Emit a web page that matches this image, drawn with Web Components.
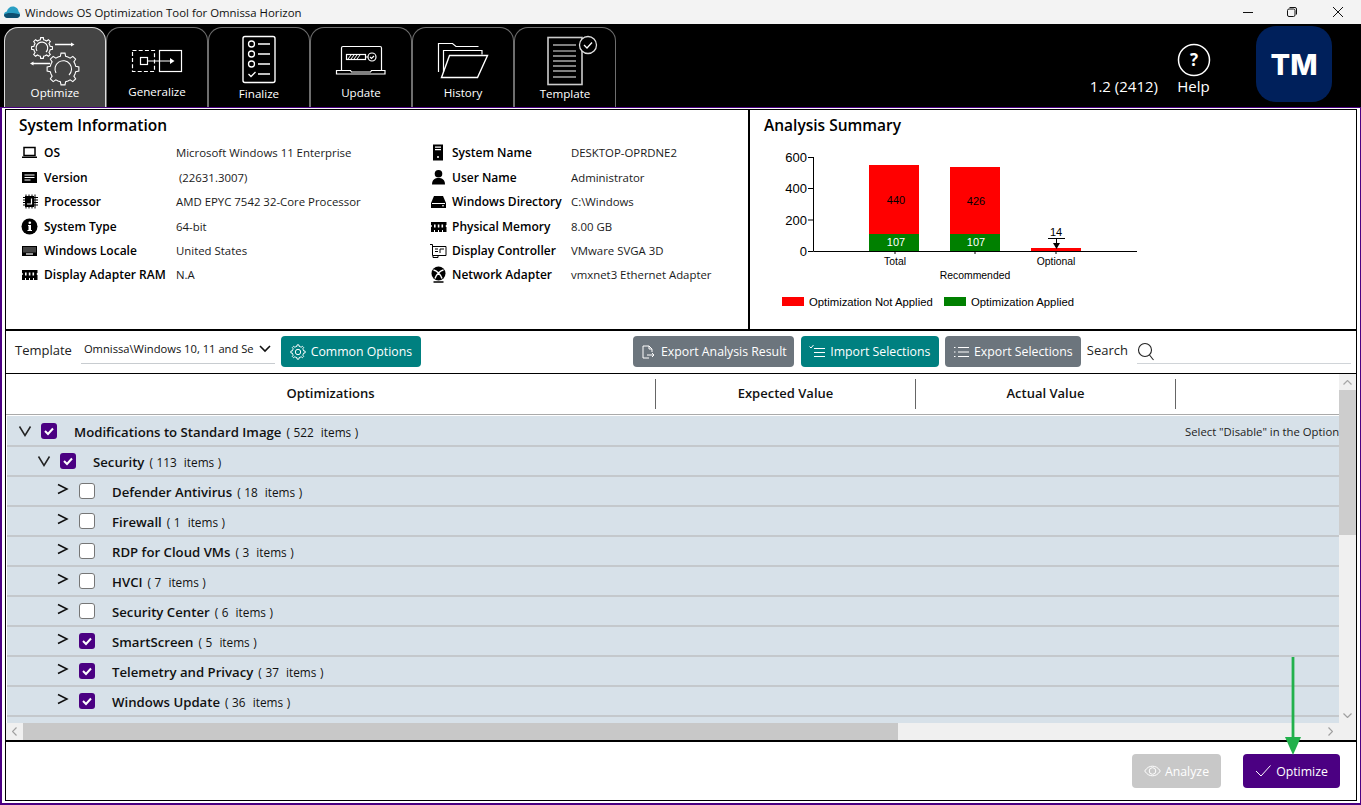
<!DOCTYPE html>
<html lang="en"><head><meta charset="utf-8"><title>Windows OS Optimization Tool</title>
<style>
html,body{margin:0;padding:0;width:1361px;height:805px;overflow:hidden;background:#fff;font-family:"Open Sans","Noto Sans",sans-serif;}
</style></head><body>
<os-app></os-app>
<script>
const UI='"Open Sans","Noto Sans",sans-serif';
function gear(cx,cy,ro,ri,n){let d='';const st=Math.PI*2/n;for(let i=0;i<n;i++){const a=i*st-Math.PI/2;const p=[[a-st*.5,ri],[a-st*.26,ri],[a-st*.16,ro],[a+st*.16,ro],[a+st*.26,ri]];p.forEach((q,j)=>{const x=(cx+q[1]*Math.cos(q[0])).toFixed(2),y=(cy+q[1]*Math.sin(q[0])).toFixed(2);d+=(i===0&&j===0?'M':'L')+x+' '+y;});}return d+'Z';}
const S='fill="none" stroke="#fff"';
const TAB_ICONS={
optimize:`<g ${S} stroke-width="1.1"><path d="${gear(42,48,10.500,8.300,8)}"/><path d="M37 51a5.800 5.800 0 1 1 9 1"/><path d="${gear(63,69,16,13,8)}"/><path d="M56 73a8.300 8.300 0 1 1 13 2"/></g><path d="M55 44.500h17" stroke="#fff" stroke-width="1.300"/><path d="M71 42.500l3.500 2-3.500 2z" fill="#fff"/><path d="M33 63.500h17" stroke="#fff" stroke-width="1.300"/><path d="M33.500 61.500l-3.500 2 3.500 2z" fill="#fff"/>`,
generalize:`<rect x="132.5" y="50.5" width="22" height="21" fill="none" stroke="#fff" stroke-width="1.2" stroke-dasharray="4 2.2"/><rect x="159.5" y="50.5" width="22" height="21" fill="none" stroke="#fff" stroke-width="1.2"/><rect x="140.5" y="57.5" width="7" height="7" fill="none" stroke="#fff" stroke-width="1.2"/><path d="M147 61h24" stroke="#fff" stroke-width="1.2"/><path d="M170 58l4.5 3-4.5 3z" fill="#fff"/>`,
finalize:`<rect x="243" y="36.5" width="32" height="46" rx="2" fill="none" stroke="#fff" stroke-width="1.4"/><g fill="none" stroke="#fff" stroke-width="1.3"><circle cx="251.5" cy="44" r="3"/><circle cx="251.5" cy="54" r="3"/><circle cx="251.5" cy="64" r="3"/><path d="M258 44h12M258 54h12M258 64h12M258 74h12"/><path d="M248.5 74l2.5 2.5 4.5-4.5"/></g>`,
update:`<g fill="none" stroke="#fff" stroke-width="1.2"><path d="M341.5 70V48a1.500 1.500 0 0 1 1.500-1.500h37a1.500 1.500 0 0 1 1.500 1.500v22"/><path d="M336.500 70.500h14l1 1.500h19l1-1.500h13.500v3.500h-48.500z"/><rect x="346.500" y="54.500" width="19" height="5"/><path d="M365 57h3"/><circle cx="372" cy="57" r="4"/><path d="M370 57l1.500 1.500 2.500-2.500"/><path d="M348 59l3-4M351 59l3-4M354 59l3-4M357 59l3-4" stroke-width="1"/></g>`,
history:`<g fill="none" stroke="#fff" stroke-width="1.2"><path d="M438.500 72V43.500h14l3.500 3h22.500"/><path d="M443.500 72V50.500h38.500v4"/><path d="M449.500 55.500h38l-10 22h-36z" stroke-width="1.400"/></g>`,
template:`<rect x="548" y="37.500" width="34" height="47" fill="none" stroke="#ccc" stroke-width="1.600"/><path d="M553 45h23M553 56h23M553 61h23M553 66h23M553 71h23M553 77h23" stroke="#fff" stroke-width="1.200"/><path d="M553 51h23" stroke="#999" stroke-width="1.500"/><circle cx="588" cy="45" r="8.500" fill="#000" stroke="#ddd" stroke-width="1.300"/><path d="M584 45l3 3 5-5.500" fill="none" stroke="#fff" stroke-width="1.300"/>`
};
const TABS=[['optimize','Optimize',5,93,true],['generalize','Generalize',107,92],['finalize','Finalize',209,94],['update','Update',311,93],['history','History',413,93],['template','Template',515,94]];
const SYS={
laptop:`<path d="M3 3.500h11v8H3z" fill="none" stroke="#000" stroke-width="1.500"/><path d="M1 12.500h15v1.500H1z"/>`,
note:`<path d="M1 3h15v11H1z"/><path d="M3.500 6h10M3.500 8.500h10M3.500 11h6" stroke="#fff"/>`,
chip:`<path d="M4 3h9v11H4z" fill="#000"/><path d="M2 4.500h15M2 7h15M2 9.500h15M2 12h15M5 1.500v14M8 1.500v14M11 1.500v14M14 1.500v14" stroke="#000"/><path d="M10.500 5.500v5.500H6" stroke="#fff" fill="none" stroke-width="1.200"/>`,
info:`<circle cx="8.500" cy="8.500" r="8"/><path d="M7 7h3v5h1v1H6.500v-1H7.500V8H7z" fill="#fff"/><circle cx="8.800" cy="4.800" r="1.300" fill="#fff"/>`,
keyboard:`<path d="M1 4h15v10H1z"/><path d="M2 5h13v5.500H2z" fill="#444"/><path d="M5 12h7" stroke="#fff" stroke-width="1.200"/>`,
ram:`<path d="M1 4h15.500v3h-.700v2h.700v5H13v-2h-1v2H9v-2H8v2H5v-2H4v2H1V9h.700V7H1z"/><path d="M4 6.500h1.600v3H4zM7.800 6.500h1.600v3H7.800zM11.500 6.500h1.600v3h-1.600z" fill="#fff"/>`,
tower:`<path d="M3 .500h10v16H3z"/><path d="M5 2.500h6v1.200H5zM5 5h6v1.200H5z" fill="#fff"/><circle cx="8" cy="13" r="1" fill="#fff"/>`,
user:`<circle cx="8.500" cy="4.700" r="3.800"/><path d="M2 15.500c0-5 3-6.500 6.500-6.500s6.500 1.500 6.500 6.500z"/>`,
disk:`<path d="M4 3h9l3 7v5H1v-5z"/><path d="M2 10.500h13" stroke="#fff"/><path d="M12 12.800h2" stroke="#fff"/>`,
card:`<path d="M0 2.500h2.500v11H16V4.500H3" fill="none" stroke="#000" stroke-width="1"/><path d="M5 7h3M5 9.500h3M10 7h4M10 7v4" fill="none" stroke="#000"/><path d="M3 13.500v2h5v-2" fill="none" stroke="#000"/>`,
globe:`<circle cx="8.500" cy="7.500" r="7"/><path d="M3.500 4c3 .5 7 4 8.500 8.500M13.500 4c-3 .5-7 4-8.500 8.500" fill="none" stroke="#fff" stroke-width="1.400"/><path d="M3.500 16h10" stroke="#000" stroke-width="1.500"/>`
};
const BTN={
gear:`<path d="${gear(8,8,7.200,5.700,8)}" fill="none" stroke="#fff" stroke-width="1"/><circle cx="8" cy="8" r="2.700" fill="none" stroke="#fff"/>`,
doc:`<path d="M9 14H3V2h6l3 3v3M9 2v3h3" fill="none" stroke="#fff"/><path d="M7 11h7M12 9l2 2-2 2" fill="none" stroke="#fff"/>`,
listcheck:`<path d="M5 4.500h11M5 8.500h11M5 12.500h11" stroke="#fff"/><path d="M.500 2.500l1.500 1.500 2.500-3" fill="none" stroke="#fff"/>`,
list:`<path d="M5 3.500h11M5 8h11M5 12.500h11" stroke="#fff"/><path d="M1 3.500h2M1 8h2M1 12.500h2" stroke="#fff" stroke-dasharray="1 .500"/>`,
eye:`<path d="M.700 8C3 4.500 5.500 3.200 8.500 3.200S14 4.500 16.300 8C14 11.500 11.500 12.800 8.500 12.800S3 11.500 .700 8z" fill="none" stroke="#fff"/><circle cx="8.500" cy="8" r="3.300" fill="none" stroke="#fff"/>`,
check:`<path d="M1 8l5 5L15.500 2.500" fill="none" stroke="#fff" stroke-width="1"/>`
};
function el(name,html){customElements.define(name,class extends HTMLElement{constructor(){super();this.attachShadow({mode:'open'}).innerHTML=typeof html==='function'?html(this):html;}});}

el('title-bar',`<style>
:host{display:flex;align-items:center;height:24px;background:#f3f3f3;color:#111;font:11.400px ${UI};box-sizing:border-box;padding-left:4px}
svg{display:block}
.t{margin-left:5px;flex:1;white-space:nowrap}
.c{width:46px;height:24px;display:flex;align-items:center;justify-content:center}
</style>
<svg width="16" height="14" viewBox="0 0 16 14"><path d="M3.500 13C1.500 13 0 11.500 0 9.700 0 8 1.200 6.800 2.800 6.500 3.500 3.500 5.800 1.500 8.800 1.500c3.200 0 5.600 2.400 5.900 5.200C15.500 7.200 16 8.300 16 9.500 16 11.500 14.500 13 12.500 13z" fill="#2a9fc4"/><path d="M0 9.700C3 7.500 8 7.500 16 9.500 16 11.500 14.500 13 12.500 13h-9C1.500 13 0 11.500 0 9.700z" fill="#0f4f70"/></svg>
<span class="t">Windows OS Optimization Tool for Omnissa Horizon</span>
<span class="c"><svg width="12" height="12"><path d="M1 6.500h10" stroke="#111" stroke-width="1"/></svg></span>
<span class="c" style="margin-left:-2px"><svg width="12" height="12"><rect x="1.500" y="3" width="7.500" height="7.500" rx="1.500" fill="none" stroke="#111"/><path d="M3.500 1.500h5.500a1.500 1.500 0 0 1 1.500 1.500v5.500" fill="none" stroke="#111"/></svg></span>
<span class="c"><svg width="12" height="12"><path d="M1 1l10 10M11 1L1 11" stroke="#111" stroke-width="1"/></svg></span>`);

el('nav-tab',t=>{const k=t.getAttribute('k'),a=t.hasAttribute('active'),x=+t.getAttribute('x'),ly=+t.getAttribute('ly');
return `<style>
:host{display:flex;flex-direction:column;align-items:center;width:102px;height:80px;box-sizing:border-box;border:1px solid ${a?'#ddd':'#6e6e6e'};border-bottom:0;border-radius:14px 14px 0 0;background:${a?'#444':'#000'};color:#fff;font:11.600px/16px ${UI};overflow:hidden}
svg{display:block;flex:none}
.l{margin-top:${ly-8-87}px}
</style><svg width="100" height="59" viewBox="${x} 28 100 59">${TAB_ICONS[k]}</svg><span class="l"><slot></slot></span>`;});

el('app-header',`<style>
:host{display:flex;height:83px;background:#000;color:#fff;box-sizing:border-box;padding:3px 0 0 4px;font:15px ${UI}}
.tabs{display:flex;align-items:flex-end;height:80px}
.sp{flex:1}
.ver{align-self:flex-start;margin:49px 18px 0 0;line-height:20px;font-size:15px}
.help{display:flex;flex-direction:column;align-items:center;width:35px;margin:16px 45px 0 0;font-size:15px;line-height:20px;flex:none}
.help svg{display:block;margin-bottom:-1px}
.logo{width:76px;height:76px;border-radius:20px;background:#00205b;color:#fff;font:800 29px/78px Inter,sans-serif;text-align:center;margin:-1px 29px 0 0;flex:none}
</style><div class="tabs">${TABS.map(t=>`<nav-tab k="${t[0]}" x="${t[2]}" ly="${t[3]}" ${t[4]?'active':''}>${t[1]}</nav-tab>`).join('')}</div>
<div class="sp"></div><div class="ver">1.2 (2412)</div>
<div class="help"><svg width="34" height="34" viewBox="0 0 34 34"><circle cx="17" cy="17" r="15.500" fill="none" stroke="#fff" stroke-width="1.500"/><text x="17" y="23" text-anchor="middle" font-family="Open Sans" font-weight="700" font-size="17" fill="#fff">?</text></svg><span>Help</span></div>
<div class="logo">TM</div>`);

el('info-item',t=>`<style>
:host{display:grid;grid-template-columns:var(--ic) var(--lb) 1fr;align-items:center;height:24.400px;font:11.400px ${UI};color:#1a1a1a;white-space:nowrap}
svg{display:block;margin-left:var(--ix)}
b{font:600 12px ${UI};color:#000}
</style><svg width="17" height="17" viewBox="0 0 17 17">${SYS[t.getAttribute('i')]}</svg><b>${t.getAttribute('l')}</b><span>${t.getAttribute('v')}</span>`);

el('system-info',`<style>
:host{display:block;width:744px;box-sizing:border-box;border-right:2px solid #000;padding:5px 0 0 13px;color:#000;}
h2{margin:0 0 5.800px;font:600 15.500px/20px ${UI}}
.g{display:grid;grid-template-columns:412px 1fr}
.a{--ic:25px;--lb:132px;--ix:2px}
.b{--ic:21px;--lb:119px;--ix:-1px}
</style><h2>System Information</h2><div class="g"><div class="a">
<info-item i="laptop" l="OS" v="Microsoft Windows 11 Enterprise"></info-item>
<info-item i="note" l="Version" v="&nbsp;(22631.3007)"></info-item>
<info-item i="chip" l="Processor" v="AMD EPYC 7542 32-Core Processor"></info-item>
<info-item i="info" l="System Type" v="64-bit"></info-item>
<info-item i="keyboard" l="Windows Locale" v="United States"></info-item>
<info-item i="ram" l="Display Adapter RAM" v="N.A"></info-item>
</div><div class="b">
<info-item i="tower" l="System Name" v="DESKTOP-OPRDNE2"></info-item>
<info-item i="user" l="User Name" v="Administrator"></info-item>
<info-item i="disk" l="Windows Directory" v="C:\\Windows"></info-item>
<info-item i="ram" l="Physical Memory" v="8.00 GB"></info-item>
<info-item i="card" l="Display Controller" v="VMware SVGA 3D"></info-item>
<info-item i="globe" l="Network Adapter" v="vmxnet3 Ethernet Adapter"></info-item>
</div></div>`);

el('analysis-summary',`<style>
:host{display:block;flex:1;position:relative;box-sizing:border-box;padding:5px 0 0 14px;color:#000}
h2{margin:0;font:600 15.500px/20px ${UI}}
svg{display:block;margin:1px 0 0 -14px}
text{font-family:"Liberation Sans",sans-serif;fill:#000}
.ax{font-size:13px}.s{font-size:10.400px}.lg{font-size:11.300px}.v{font-size:11px}
</style><h2>Analysis Summary</h2>
<svg width="600" height="193" viewBox="750 136 600 193">
<path d="M813.500 157v94.500H1137M808 157.500h5M808 188.500h5M808 220h5M808 251.500h5M895 251v3M975 251v3M1056 251v3" fill="none" stroke="#000"/>
<text class="ax" x="807" y="161.500" text-anchor="end">600</text><text class="ax" x="807" y="192.500" text-anchor="end">400</text><text class="ax" x="807" y="224.500" text-anchor="end">200</text><text class="ax" x="807" y="255.500" text-anchor="end">0</text>
<rect x="869" y="165" width="50" height="69" fill="#f00"/><rect x="869" y="234" width="50" height="17" fill="#008000"/>
<rect x="950" y="167" width="50" height="67" fill="#f00"/><rect x="950" y="234" width="50" height="17" fill="#008000"/>
<rect x="1031" y="248" width="50" height="3" fill="#f00"/>
<text class="v" x="896" y="203.500" text-anchor="middle">440</text><text class="v" x="976" y="204.500" text-anchor="middle">426</text>
<text class="v" x="896" y="246" text-anchor="middle" style="fill:#fff">107</text><text class="v" x="976" y="246" text-anchor="middle" style="fill:#fff">107</text>
<text class="v" x="1056" y="236" text-anchor="middle">14</text>
<path d="M1048 238.500h17M1056.500 239v5" stroke="#000"/><path d="M1053 243h7l-3.500 6z" fill="#000"/>
<text class="s" x="895" y="264.500" text-anchor="middle">Total</text><text class="s" x="1056" y="264.500" text-anchor="middle">Optional</text><text class="s" x="975" y="279" text-anchor="middle">Recommended</text>
<rect x="782" y="297" width="22" height="9" fill="#f00"/><text class="lg" x="809" y="306">Optimization Not Applied</text>
<rect x="944" y="297" width="22" height="9" fill="#008000"/><text class="lg" x="971" y="306">Optimization Applied</text>
</svg>`);

el('ui-btn',t=>`<style>
:host{display:inline-flex;align-items:center;justify-content:center;gap:4px;box-sizing:border-box;height:31px;border-radius:4px;background:${t.getAttribute('bg')};color:#fff;font:12.300px ${UI};white-space:nowrap;width:${t.getAttribute('w')}px;flex:none}
svg{display:block}
</style><svg width="17" height="16" viewBox="0 0 17 16">${BTN[t.getAttribute('i')]}</svg><slot></slot>`);

el('app-toolbar',`<style>
:host{display:flex;align-items:flex-start;height:42px;box-sizing:border-box;padding:5px 0 0 9px;font:13px ${UI};color:#222}
.lbl{margin-top:4px;line-height:20px}
.combo{width:194px;height:28px;margin:0 6px 0 9px;border-bottom:1px solid #c8ccd0;display:flex;align-items:center;box-sizing:border-box;padding:0 3px 2px 3px;flex:none;font-size:11.200px;color:#111}
.combo span{width:169px;white-space:nowrap}
.combo svg{margin-left:6px;display:block}
.sp{flex:1}
.r{display:flex;gap:7px}
.s{margin:4px 0 0 6px;line-height:20px}
.q{width:214px;height:28px;margin:0 5px 0 9px;border-bottom:1px solid #d0d4d8;box-sizing:border-box;padding-top:6px;flex:none}
svg{display:block}
</style><span class="lbl">Template</span>
<div class="combo"><span>Omnissa\\Windows 10, 11 and Se</span><svg width="12" height="8"><path d="M1 1l5 5 5-5" fill="none" stroke="#111" stroke-width="1.600"/></svg></div>
<ui-btn bg="#008080" w="140" i="gear">Common Options</ui-btn><div class="sp"></div>
<div class="r"><ui-btn bg="#6c757d" w="161" i="doc">Export Analysis Result</ui-btn><ui-btn bg="#008080" w="138" i="listcheck">Import Selections</ui-btn><ui-btn bg="#6c757d" w="136" i="list" style="margin-left:-1px">Export Selections</ui-btn></div>
<span class="s">Search</span>
<div class="q"><svg width="19" height="19" viewBox="0 0 19 19"><circle cx="8" cy="8" r="6.500" fill="none" stroke="#222" stroke-width="1.100"/><path d="M12.500 13l4 5" stroke="#222" stroke-width="1.100"/></svg></div>`);

el('tree-row',t=>{const lv=+t.getAttribute('level')||0,open=t.hasAttribute('open'),ck=t.hasAttribute('checked'),note=t.getAttribute('note');
const chev=open?`<svg width="14" height="12" viewBox="0 0 14 12"><path d="M1.500 1.500L7 10.500l5.500-9" fill="none" stroke="#222" stroke-width="1.500"/></svg>`:`<svg width="14" height="12" viewBox="0 0 14 12" style="margin-top:-5px"><path d="M2 1.500l9 4.500-9 4.500" fill="none" stroke="#111" stroke-width="1.500"/></svg>`;
return `<style>
:host{display:flex;align-items:center;height:30px;box-sizing:border-box;background:#d7e1e9;border-bottom:2px solid #c4c8cc;padding-left:${11+lv*19}px;white-space:nowrap;color:#111;position:relative;font:12px ${UI}}
svg{display:block;flex:none}
.cb{width:16px;height:16px;margin:0 0 0 9px;border-radius:3px;box-sizing:border-box;flex:none;${ck?'background:#4b0082':'background:#fff;border:1px solid #767676'}}
b{font:600 13.200px ${UI};margin-left:17px;padding-top:2px}
.c{margin-left:5px;word-spacing:.5px;font-size:11.800px;padding-top:1px}
.n{position:absolute;left:1178px;top:7px;font-size:11.300px;color:#222}
</style>${chev}<div class="cb">${ck?`<svg width="16" height="16" viewBox="0 0 16 16"><path d="M4 8l3 3 5-5.500" fill="none" stroke="#fff" stroke-width="2"/></svg>`:''}</div><b>${t.getAttribute('name')}</b><span class="c">( ${t.getAttribute('count')}&nbsp; items )</span>${note?`<span class="n">${note}</span>`:''}`;});

el('opt-table',`<style>
:host{display:grid;grid-template-columns:1fr 17px;grid-template-rows:42px 1fr 17px;height:369px;box-sizing:border-box;border-top:1px solid #000;border-bottom:2px solid #000;font:12px ${UI};color:#111}
.hd{display:grid;grid-template-columns:650px 260px 260px 1fr;border-bottom:1px solid #aaa;margin-bottom:1px;font:600 13px ${UI};align-items:center;text-align:center}
.hd span{height:30px;line-height:28px;border-right:1px solid #666}
.hd span:last-child{border:0}
.body{overflow:hidden;padding:0 0 0 1px;background:#d7e1e9;box-shadow:inset 1px 0 0 #fff}
.wrap{display:block;margin-top:1px}
.v{grid-row:1/4;grid-column:2;background:#f0f0f0;display:flex;flex-direction:column;align-items:center}
.v .th{width:17px;background:#cdcdcd;height:145px}
.v .ar{height:16px;display:flex;align-items:center;justify-content:center;flex:none}
.h{grid-column:1;background:#f0f0f0;display:flex;align-items:center}
.h .th{background:#c8c8c8;width:875px;height:17px}
.h .ar{width:17px;display:flex;justify-content:center;flex:none}
.fl{flex:1}
</style>
<div class="hd"><span>Optimizations</span><span>Expected Value</span><span>Actual Value</span><span></span></div>
<div class="v"><div class="ar"><svg width="9" height="5"><path d="M.500 4.500l4-4 4 4" fill="none" stroke="#a8a8a8" stroke-width="1.200"/></svg></div><div class="th"></div><div class="fl"></div><div class="ar" style="height:27px"><svg width="9" height="5" style="margin-bottom:3px;align-self:flex-start"><path d="M.500.500l4 4 4-4" fill="none" stroke="#a0a0a0" stroke-width="1.200"/></svg></div></div>
<div class="body"><div class="wrap">
<tree-row open checked name="Modifications to Standard Image" count="522" note='Select "Disable" in the Option'></tree-row>
<tree-row level="1" open checked name="Security" count="113"></tree-row>
<tree-row level="2" name="Defender Antivirus" count="18"></tree-row>
<tree-row level="2" name="Firewall" count="1"></tree-row>
<tree-row level="2" name="RDP for Cloud VMs" count="3"></tree-row>
<tree-row level="2" name="HVCI" count="7"></tree-row>
<tree-row level="2" name="Security Center" count="6"></tree-row>
<tree-row level="2" checked name="SmartScreen" count="5"></tree-row>
<tree-row level="2" checked name="Telemetry and Privacy" count="37"></tree-row>
<tree-row level="2" checked name="Windows Update" count="36"></tree-row>
</div></div>
<div class="h"><div class="ar"><svg width="5" height="9"><path d="M4.500.500l-4 4 4 4" fill="none" stroke="#a0a0a0" stroke-width="1.200"/></svg></div><div class="th"></div><div class="fl"></div><div class="ar"><svg width="5" height="9"><path d="M.500.500l4 4-4 4" fill="none" stroke="#a0a0a0" stroke-width="1.200"/></svg></div></div>`);

el('app-footer',`<style>
:host{display:flex;justify-content:flex-end;align-items:flex-start;gap:22px;height:58px;box-sizing:border-box;padding:12px 16px 0 0}
ui-btn{height:34px}
</style><ui-btn bg="#c8c8c8" w="89" i="eye">Analyze</ui-btn><ui-btn bg="#4b0082" w="97" i="check">Optimize</ui-btn>`);

el('main-frame',`<style>
:host{display:block;height:698px;box-sizing:border-box;border:1px solid #4b0082;border-width:1px 1px 2px 2px;padding:1px 3px 2px 3px;background:#fff}
.in{height:692px;box-sizing:border-box;border:1px solid #000}
.top{display:flex;height:221px;box-sizing:border-box;border-bottom:2px solid #000}
</style><div class="in"><div class="top"><system-info></system-info><analysis-summary></analysis-summary></div><app-toolbar></app-toolbar><opt-table></opt-table><app-footer></app-footer></div>`);

el('os-app',`<style>
:host{display:block;width:1361px;height:805px;position:relative;overflow:hidden;background:#fff}
.arrow{position:absolute;left:1280px;top:655px;display:block}
</style><title-bar></title-bar><app-header></app-header><main-frame></main-frame>
<svg class="arrow" width="26" height="102" viewBox="0 0 26 102"><path d="M13 2v84" stroke="#22b14c" stroke-width="2.800"/><path d="M5 82h16l-8 18z" fill="#22b14c"/></svg>`);
</script></body></html>
